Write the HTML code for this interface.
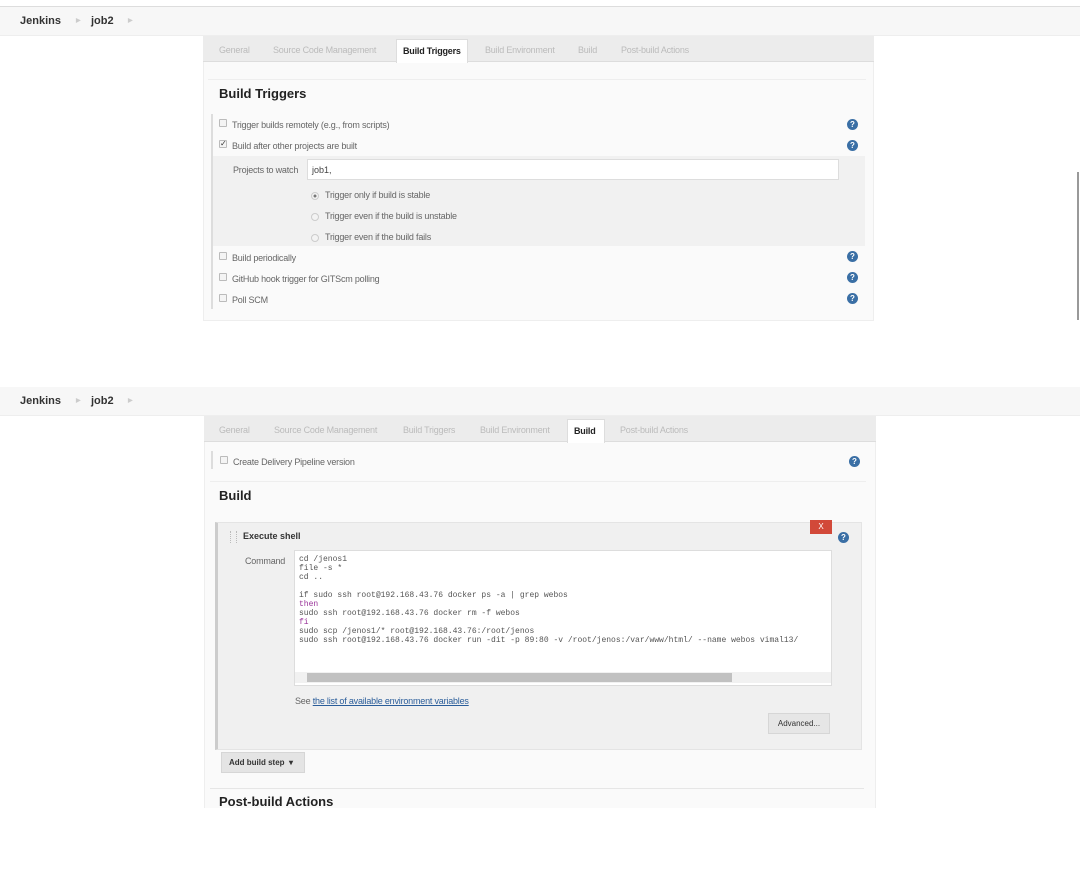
<!DOCTYPE html>
<html><head><style>
*{margin:0;padding:0;box-sizing:border-box}
body{width:1080px;height:872px;background:#fff;font-family:"Liberation Sans",sans-serif;position:relative;overflow:hidden;color:#333}
.a{position:absolute}
.bc{left:0;width:1080px;height:29px;background:#f7f7f7;border-bottom:1px solid #eee;font-size:11px;font-weight:bold;color:#333}
.bc span{position:absolute;top:8px}
.bc i{position:absolute;top:10px;font-style:normal;color:#ccc;font-size:6px}
.tabs{height:26px;background:#ececec;border-bottom:1px solid #ddd}
.tab{position:absolute;top:9px;font-size:9px;color:#bbb;letter-spacing:-0.2px}
.tab.on{top:3px;height:24px;background:#fff;border:1px solid #ddd;border-bottom:none;color:#222;font-weight:bold;padding:6px 6px 0}
.t{font-size:9px;color:#666;letter-spacing:-0.2px}
.cb{width:8px;height:8px;border:1px solid #bbb;background:#f4f4f4;border-radius:1px}
.rd{width:8px;height:8px;border:1px solid #ccc;border-radius:50%;background:#f3f3f3}
.h{width:11px;height:11px;border-radius:50%;background:#3a6fa5;color:#fff;font-size:8px;font-weight:bold;text-align:center;line-height:11px}
pre{font-family:"Liberation Mono",monospace;font-size:8px;line-height:9px;color:#555}
</style></head><body>
<div class="a" style="left:0;top:6px;width:1080px;height:1px;background:#ddd"></div>
<div class="a bc" style="top:7px"><span style="left:20px">Jenkins</span><i style="left:76px">▶</i><span style="left:91px">job2</span><i style="left:128px">▶</i></div>

<div class="a" style="left:203px;top:36px;width:671px;height:285px;background:#fafafa;border:1px solid #eee"></div>
<div class="a tabs" style="left:203px;top:36px;width:671px">
<span class="tab" style="left:16px">General</span><span class="tab" style="left:70px">Source Code Management</span>
<span class="tab on" style="left:193px">Build Triggers</span><span class="tab" style="left:282px">Build Environment</span>
<span class="tab" style="left:375px">Build</span><span class="tab" style="left:418px">Post-build Actions</span></div>
<div class="a" style="left:208px;top:79px;width:658px;height:1px;background:#eee"></div>
<div class="a" style="left:219px;top:86px;font-size:13px;font-weight:bold;color:#222">Build Triggers</div>
<div class="a" style="left:211px;top:114px;width:2px;height:195px;background:#ddd"></div>
<div class="a" style="left:213px;top:156px;width:652px;height:90px;background:#f1f1f1"></div>
<div class="a cb" style="left:219px;top:119px"></div><div class="a t" style="left:232px;top:120px">Trigger builds remotely (e.g., from scripts)</div>
<div class="a cb" style="left:219px;top:140px;font-size:8px;line-height:6px;color:#333">✓</div><div class="a t" style="left:232px;top:141px">Build after other projects are built</div>
<div class="a t" style="left:233px;top:165px">Projects to watch</div>
<div class="a" style="left:307px;top:159px;width:532px;height:21px;background:#fff;border:1px solid #ddd;font-size:9px;padding:5px 4px;color:#444">job1,</div>
<div class="a rd" style="left:311px;top:192px;background:radial-gradient(#777 30%,#f3f3f3 40%)"></div><div class="a t" style="left:325px;top:190px">Trigger only if build is stable</div>
<div class="a rd" style="left:311px;top:213px"></div><div class="a t" style="left:325px;top:211px">Trigger even if the build is unstable</div>
<div class="a rd" style="left:311px;top:234px"></div><div class="a t" style="left:325px;top:232px">Trigger even if the build fails</div>
<div class="a cb" style="left:219px;top:252px"></div><div class="a t" style="left:232px;top:253px">Build periodically</div>
<div class="a cb" style="left:219px;top:273px"></div><div class="a t" style="left:232px;top:274px">GitHub hook trigger for GITScm polling</div>
<div class="a cb" style="left:219px;top:294px"></div><div class="a t" style="left:232px;top:295px">Poll SCM</div>
<div class="a h" style="left:847px;top:119px">?</div><div class="a h" style="left:847px;top:140px">?</div>
<div class="a h" style="left:847px;top:251px">?</div><div class="a h" style="left:847px;top:272px">?</div><div class="a h" style="left:847px;top:293px">?</div>
<div class="a" style="left:1077px;top:172px;width:2px;height:148px;background:#999"></div>

<div class="a bc" style="top:387px"><span style="left:20px">Jenkins</span><i style="left:76px">▶</i><span style="left:91px">job2</span><i style="left:128px">▶</i></div>
<div class="a" style="left:204px;top:416px;width:672px;height:392px;background:#fafafa;border:1px solid #eee;border-bottom:none"></div>
<div class="a tabs" style="left:204px;top:416px;width:672px">
<span class="tab" style="left:15px">General</span><span class="tab" style="left:70px">Source Code Management</span>
<span class="tab" style="left:199px">Build Triggers</span><span class="tab" style="left:276px">Build Environment</span>
<span class="tab on" style="left:363px;width:38px">Build</span><span class="tab" style="left:416px">Post-build Actions</span></div>
<div class="a" style="left:211px;top:451px;width:2px;height:18px;background:#ddd"></div>
<div class="a cb" style="left:220px;top:456px"></div><div class="a t" style="left:233px;top:457px">Create Delivery Pipeline version</div>
<div class="a h" style="left:849px;top:456px">?</div>
<div class="a" style="left:210px;top:481px;width:656px;height:1px;background:#eee"></div>
<div class="a" style="left:219px;top:488px;font-size:13px;font-weight:bold;color:#222">Build</div>
<div class="a" style="left:215px;top:522px;width:647px;height:228px;background:#f0f0f0;border:1px solid #e4e4e4;border-left:3px solid #ccc"></div>
<div class="a" style="left:230px;top:531px;width:7px;height:12px;border-left:1px dotted #bbb;border-right:1px dotted #bbb"></div>
<div class="a" style="left:243px;top:531px;font-size:9px;font-weight:bold;color:#333">Execute shell</div>
<div class="a" style="left:810px;top:520px;width:22px;height:14px;background:#d24939;color:#fff;font-size:8px;text-align:center;line-height:14px">X</div>
<div class="a h" style="left:838px;top:532px">?</div>
<div class="a t" style="left:245px;top:556px">Command</div>
<div class="a" style="left:294px;top:550px;width:538px;height:136px;background:#fff;border:1px solid #ddd"></div>
<pre class="a" style="left:299px;top:555px">cd /jenos1
file -s *
cd ..

if sudo ssh root@192.168.43.76 docker ps -a | grep webos
<span style="color:#939">then</span>
sudo ssh root@192.168.43.76 docker rm -f webos
<span style="color:#939">fi</span>
sudo scp /jenos1/* root@192.168.43.76:/root/jenos
sudo ssh root@192.168.43.76 docker run -dit -p 89:80 -v /root/jenos:/var/www/html/ --name webos vimal13/</pre>
<div class="a" style="left:295px;top:672px;width:536px;height:11px;background:#f1f1f1"></div>
<div class="a" style="left:307px;top:673px;width:425px;height:9px;background:#c1c1c1"></div>
<div class="a t" style="left:295px;top:696px">See <span style="color:#2a5d9a;text-decoration:underline">the list of available environment variables</span></div>
<div class="a" style="left:768px;top:713px;width:62px;height:21px;background:#e6e6e6;border:1px solid #d6d6d6;font-size:8px;color:#333;text-align:center;line-height:20px">Advanced...</div>
<div class="a" style="left:221px;top:752px;width:84px;height:21px;background:#e4e4e4;border:1px solid #d6d6d6;font-size:8px;font-weight:bold;color:#333;padding:5px 7px">Add build step &nbsp;▾</div>
<div class="a" style="left:210px;top:788px;width:654px;height:1px;background:#e6e6e6"></div>
<div class="a" style="left:219px;top:794px;font-size:13px;font-weight:bold;color:#222">Post-build Actions</div>
</body></html>
